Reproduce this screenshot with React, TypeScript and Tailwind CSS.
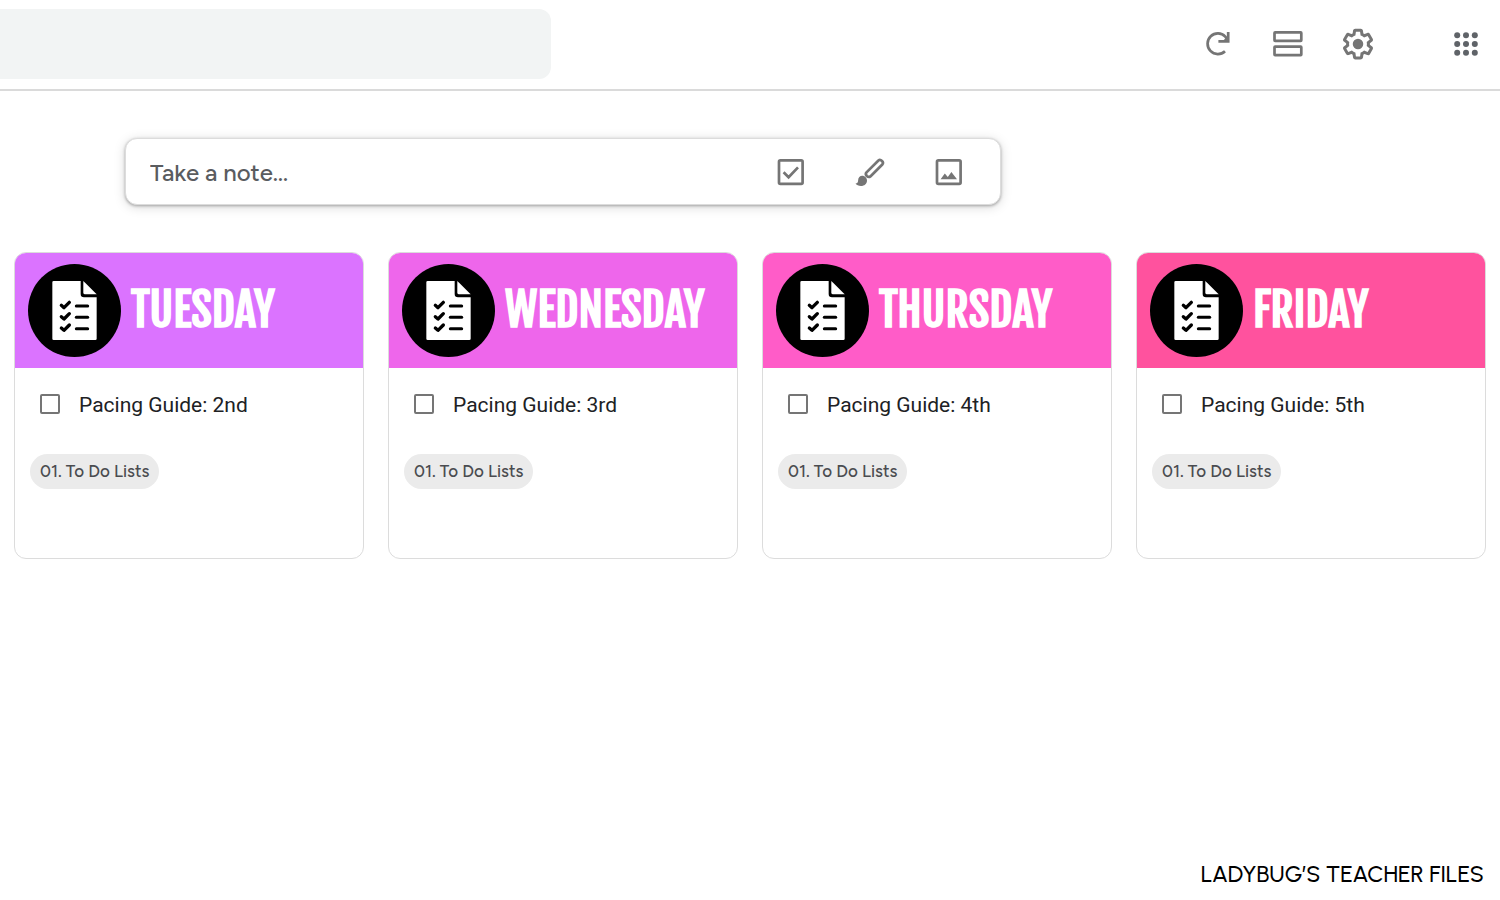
import { useState } from 'react'

const days = [
  { name: 'TUESDAY', task: 'Pacing Guide: 2nd', color: 'bg-[#db73ff]' },
  { name: 'WEDNESDAY', task: 'Pacing Guide: 3rd', color: 'bg-[#ee66eb]' },
  { name: 'THURSDAY', task: 'Pacing Guide: 4th', color: 'bg-[#ff5cc8]' },
  { name: 'FRIDAY', task: 'Pacing Guide: 5th', color: 'bg-[#ff529e]' },
]

const iconButton = 'flex size-9 shrink-0 items-center justify-center rounded-full text-[#757575] cursor-pointer'

function RefreshIcon() {
  return (
    <svg viewBox="0 0 36 36" className="size-9" fill="none" stroke="currentColor" strokeWidth="2.7">
      <path d="M25 25.2A10.3 10.3 0 1 1 25.3 10.6L27.8 14" />
      <path d="M28.2 6V15.3H18.4" />
      <path d="M22.500 15.300H28.200V9.500Z" fill="currentColor" stroke="none" />
    </svg>
  )
}

function ListViewIcon() {
  return (
    <svg viewBox="0 0 36 36" className="size-9" fill="none" stroke="currentColor" strokeWidth="2.7">
      <rect x="4.5" y="6.3" width="26.8" height="8.6" rx="0.6" />
      <rect x="4.5" y="20.6" width="26.8" height="8.6" rx="0.6" />
    </svg>
  )
}

function SettingsIcon() {
  return (
    <svg viewBox="0 0 24 24" className="size-9" fill="currentColor">
      <path d="M13.85 22.25h-3.7c-.74 0-1.36-.54-1.45-1.27l-.27-1.89c-.27-.14-.53-.29-.79-.46l-1.8.72c-.7.26-1.47-.03-1.81-.65L2.2 15.53c-.35-.66-.2-1.44.36-1.88l1.53-1.19c-.01-.15-.02-.3-.02-.46 0-.15.01-.31.02-.46l-1.52-1.19c-.59-.45-.74-1.26-.37-1.88l1.85-3.19c.34-.62 1.11-.9 1.79-.63l1.81.73c.26-.17.52-.32.78-.46l.27-1.91c.09-.7.71-1.25 1.44-1.25h3.7c.74 0 1.36.54 1.45 1.27l.27 1.89c.27.14.53.29.79.46l1.8-.72c.71-.26 1.48.03 1.82.65l1.84 3.18c.36.66.2 1.44-.36 1.88l-1.52 1.19c.01.15.02.3.02.46s-.01.31-.02.46l1.52 1.19c.56.45.72 1.23.37 1.86l-1.86 3.22c-.34.62-1.11.9-1.8.63l-1.8-.72c-.26.17-.52.32-.78.46l-.27 1.91c-.1.68-.72 1.22-1.46 1.22zm-3.23-2h2.76l.37-2.55.53-.22c.44-.18.88-.44 1.34-.78l.45-.34 2.38.96 1.38-2.4-2.03-1.58.07-.56c.03-.26.06-.51.06-.78s-.03-.53-.06-.78l-.07-.56 2.03-1.58-1.39-2.4-2.39.96-.45-.35c-.42-.32-.87-.58-1.33-.77l-.52-.22-.37-2.55h-2.76l-.37 2.55-.53.21c-.44.19-.88.44-1.34.79l-.45.33-2.38-.95-1.39 2.39 2.03 1.58-.07.56a7 7 0 0 0-.06.79c0 .26.02.53.06.78l.07.56-2.03 1.58 1.38 2.4 2.39-.96.45.35c.43.33.86.58 1.33.77l.53.22.38 2.55z" />
      <circle cx="12" cy="12" r="3.5" />
    </svg>
  )
}

function AppsIcon() {
  return (
    <svg viewBox="0 0 36 36" className="size-9 text-[#5f6368]" fill="currentColor">
      {[9.2, 18, 26.8].map((y) =>
        [9.2, 18, 26.8].map((x) => <circle key={`${x}-${y}`} cx={x} cy={y} r="3" />)
      )}
    </svg>
  )
}

function NewListIcon() {
  return (
    <svg viewBox="0 0 36 36" className="size-9" fill="none" stroke="currentColor" strokeWidth="2.7">
      <rect x="6" y="6.3" width="23.6" height="23.6" rx="1.4" />
      <path d="M10.6 18.2L15.6 23.2L25 13.4" />
    </svg>
  )
}

function BrushIcon() {
  return (
    <svg viewBox="0 0 36 36" className="size-9" fill="currentColor">
      <path
        d="M14.5 18.4L26.4 6.5Q28.1 5.1 30 7Q31.8 8.8 30.3 10.5L18.4 22.4Q16.7 23.7 14.8 22Q13 20.1 14.5 18.4Z"
        fill="none"
        stroke="currentColor"
        strokeWidth="2.7"
      />
      <path d="M10.2 21.7C12.8 21.7 15 23.9 15 26.4C15 29.7 12.3 31.9 9 31.9C6.6 31.9 4.4 30.9 3.5 29.4C5 29.5 6.1 28.5 6.1 26.4C6.1 23.7 8 21.7 10.2 21.7Z" />
    </svg>
  )
}

function ImageIcon() {
  return (
    <svg viewBox="0 0 36 36" className="size-9" fill="none" stroke="currentColor" strokeWidth="2.7">
      <rect x="6" y="6.3" width="23.6" height="23.6" rx="1.4" />
      <path d="M9.6 25.2L13.8 19.6L16.8 23L20.4 18L26 25.2Z" fill="currentColor" stroke="none" />
    </svg>
  )
}

function ChecklistBadge() {
  return (
    <svg viewBox="0 0 279 279" className="size-[93px] shrink-0">
      <circle cx="139.5" cy="139.5" r="139.5" fill="#000" />
      <path d="M77 51H158V90Q158 100 168 100H206V224Q206 228 202 228H77Q73 228 73 224V55Q73 51 77 51Z" fill="#fff" />
      <path d="M166 51L206 91H171Q166 91 166 86Z" fill="#fff" />
      <g fill="none" stroke="#000" strokeLinecap="round" strokeLinejoin="round">
        {[0, 34, 68].map((dy) => (
          <g key={dy} transform={`translate(0 ${dy})`}>
            <path d="M100 124L108 131L124 115" strokeWidth="10" />
            <path d="M145 126H179" strokeWidth="9" />
          </g>
        ))}
      </g>
    </svg>
  )
}

function DayCard({ day }: { day: (typeof days)[number] }) {
  const [done, setDone] = useState(false)

  return (
    <article className="flex min-h-[307px] flex-col overflow-hidden rounded-xl border border-[#dcdcdc] bg-white">
      <div className={`flex h-[115px] items-center gap-[10px] pl-[13px] ${day.color}`}>
        <ChecklistBadge />
        <h2 className="font-['Fjalla_One','Open_Sans_Condensed',sans-serif] text-[45px] leading-none font-bold text-white">
          {day.name}
        </h2>
      </div>
      <label className="mt-[22px] flex h-8 items-center gap-[19px] pl-[25px] text-[21px] text-[#202124]">
        <input
          type="checkbox"
          checked={done}
          onChange={(e) => setDone(e.target.checked)}
          className="mb-1 size-5 shrink-0 appearance-none rounded-[2px] border-2 border-[#757575] checked:bg-[#757575]"
        />
        {day.task}
      </label>
      <div className="mt-8 pl-[15px]">
        <button className="h-[35px] cursor-pointer rounded-full bg-[#ebebeb] px-[10px] font-['Google_Sans','Product_Sans','Figtree',Roboto,sans-serif] text-[17px] font-medium text-[#4a4c50]">
          01. To Do Lists
        </button>
      </div>
    </article>
  )
}

export default function App() {
  return (
    <div className="flex min-h-screen flex-col bg-white font-[Roboto,sans-serif]">
      <header className="flex items-center justify-between border-b-2 border-[#dadada] pt-[9px] pr-4 pb-[10px]">
        <input
          type="search"
          aria-label="Search"
          className="h-[70px] w-[551px] min-w-0 rounded-r-xl bg-[#f2f4f4] px-6 text-2xl outline-none"
        />
        <div className="flex items-center gap-[34px]">
          <button aria-label="Refresh" className={iconButton}><RefreshIcon /></button>
          <button aria-label="List view" className={iconButton}><ListViewIcon /></button>
          <button aria-label="Settings" className={iconButton}><SettingsIcon /></button>
          <button aria-label="Google apps" className={`${iconButton} ml-[38px]`}><AppsIcon /></button>
        </div>
      </header>

      <main className="px-[14px] pt-[47px]">
        <div className="ml-[111px] flex h-[67px] max-w-[876px] items-center rounded-xl border border-[#dcdcdc] bg-white pr-[33px] pl-6 shadow-[0_1px_3px_rgba(0,0,0,0.3),0_2px_12px_rgba(0,0,0,0.15)]">
          <input
            type="text"
            aria-label="Take a note"
            placeholder="Take a note…"
            className="min-w-0 flex-1 pt-[3px] font-['Google_Sans','Product_Sans','Figtree',Roboto,sans-serif] text-2xl font-medium text-[#3c4043] outline-none placeholder:text-[#5a5c5f]"
          />
          <div className="flex items-center gap-[43px]">
            <button aria-label="New list" className={iconButton}><NewListIcon /></button>
            <button aria-label="New note with drawing" className={iconButton}><BrushIcon /></button>
            <button aria-label="New note with image" className={iconButton}><ImageIcon /></button>
          </div>
        </div>

        <section className="mt-[47px] grid grid-cols-4 gap-6">
          {days.map((day) => (
            <DayCard key={day.name} day={day} />
          ))}
        </section>
      </main>

      <footer className="mt-auto px-4 pb-3 text-right font-['Glacial_Indifference','Urbanist',Lato,sans-serif] text-[23px] leading-7 font-medium text-black">
        LADYBUG’S TEACHER FILES
      </footer>
    </div>
  )
}
